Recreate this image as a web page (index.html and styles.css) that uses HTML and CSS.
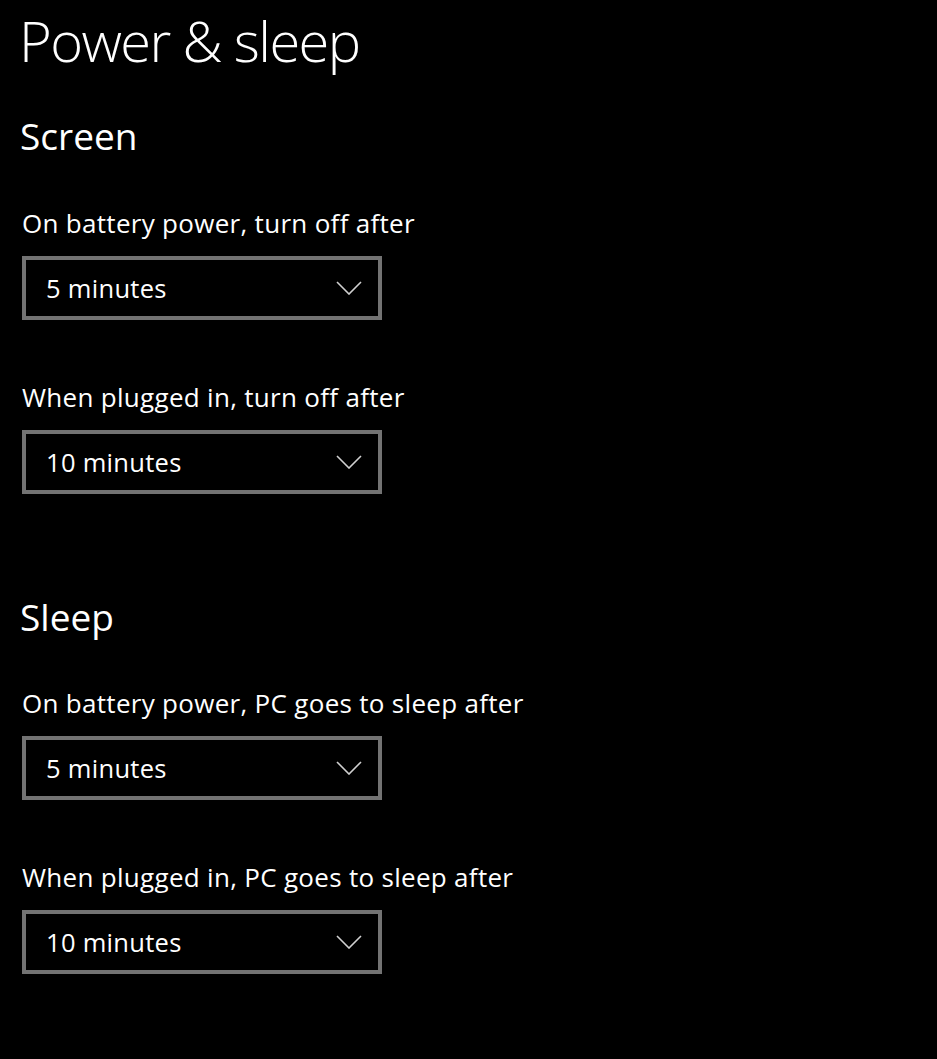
FILE: index.html
```html
<!DOCTYPE html>
<html lang="en">
<head>
<meta charset="utf-8">
<title>Power &amp; sleep</title>
<link rel="stylesheet" href="styles.css">
</head>
<body>
<main class="page">
  <h1 class="title">Power &amp; sleep</h1>

  <section class="section section-screen">
    <h2 class="section-title">Screen</h2>
    <div class="field">
      <div class="field-label">On battery power, turn off after</div>
      <div class="combo">
        <span class="combo-value">5 minutes</span>
        <svg class="chevron" width="26" height="14" viewBox="0 0 26 14" aria-hidden="true"><polyline points="1,1 13,13 25,1" /></svg>
      </div>
    </div>
    <div class="field">
      <div class="field-label">When plugged in, turn off after</div>
      <div class="combo">
        <span class="combo-value">10 minutes</span>
        <svg class="chevron" width="26" height="14" viewBox="0 0 26 14" aria-hidden="true"><polyline points="1,1 13,13 25,1" /></svg>
      </div>
    </div>
  </section>

  <section class="section section-sleep">
    <h2 class="section-title">Sleep</h2>
    <div class="field">
      <div class="field-label">On battery power, PC goes to sleep after</div>
      <div class="combo">
        <span class="combo-value">5 minutes</span>
        <svg class="chevron" width="26" height="14" viewBox="0 0 26 14" aria-hidden="true"><polyline points="1,1 13,13 25,1" /></svg>
      </div>
    </div>
    <div class="field">
      <div class="field-label">When plugged in, PC goes to sleep after</div>
      <div class="combo">
        <span class="combo-value">10 minutes</span>
        <svg class="chevron" width="26" height="14" viewBox="0 0 26 14" aria-hidden="true"><polyline points="1,1 13,13 25,1" /></svg>
      </div>
    </div>
  </section>
</main>
</body>
</html>
```

FILE: styles.css
```css
html, body {
  margin: 0;
  padding: 0;
  background: #000;
  color: #fff;
  font-family: "Open Sans", "Noto Sans", sans-serif;
}

.page {
  padding: 12px 0 0 20px;
}

.title {
  margin: 0 0 0 -1px;
  font-size: 56px;
  line-height: 56px;
  font-weight: 300;
  letter-spacing: -1.6px;
}

.section {
  display: flex;
  flex-direction: column;
  margin-top: 49px;
}

.section-sleep {
  margin-top: 104px;
}

.section-title {
  margin: 0 0 55px 0;
  font-size: 37px;
  line-height: 38px;
  font-weight: 400;
}

.section-sleep .section-title {
  margin-bottom: 54px;
}

.field {
  display: flex;
  flex-direction: column;
  align-items: flex-start;
  padding-left: 2px;
}

.field + .field {
  margin-top: 64px;
}

.field-label {
  font-size: 26px;
  line-height: 26px;
  letter-spacing: 0.3px;
  margin-bottom: 20px;
}

.combo {
  box-sizing: border-box;
  width: 360px;
  height: 64px;
  border: 4px solid #737373;
  display: flex;
  align-items: center;
  justify-content: space-between;
  padding: 0 16px 0 20px;
}

.combo-value {
  font-size: 25.5px;
  line-height: 26px;
  letter-spacing: 0.3px;
}

.chevron {
  display: block;
  fill: none;
  stroke: #d0d0d0;
  stroke-width: 1.6;
}
```
